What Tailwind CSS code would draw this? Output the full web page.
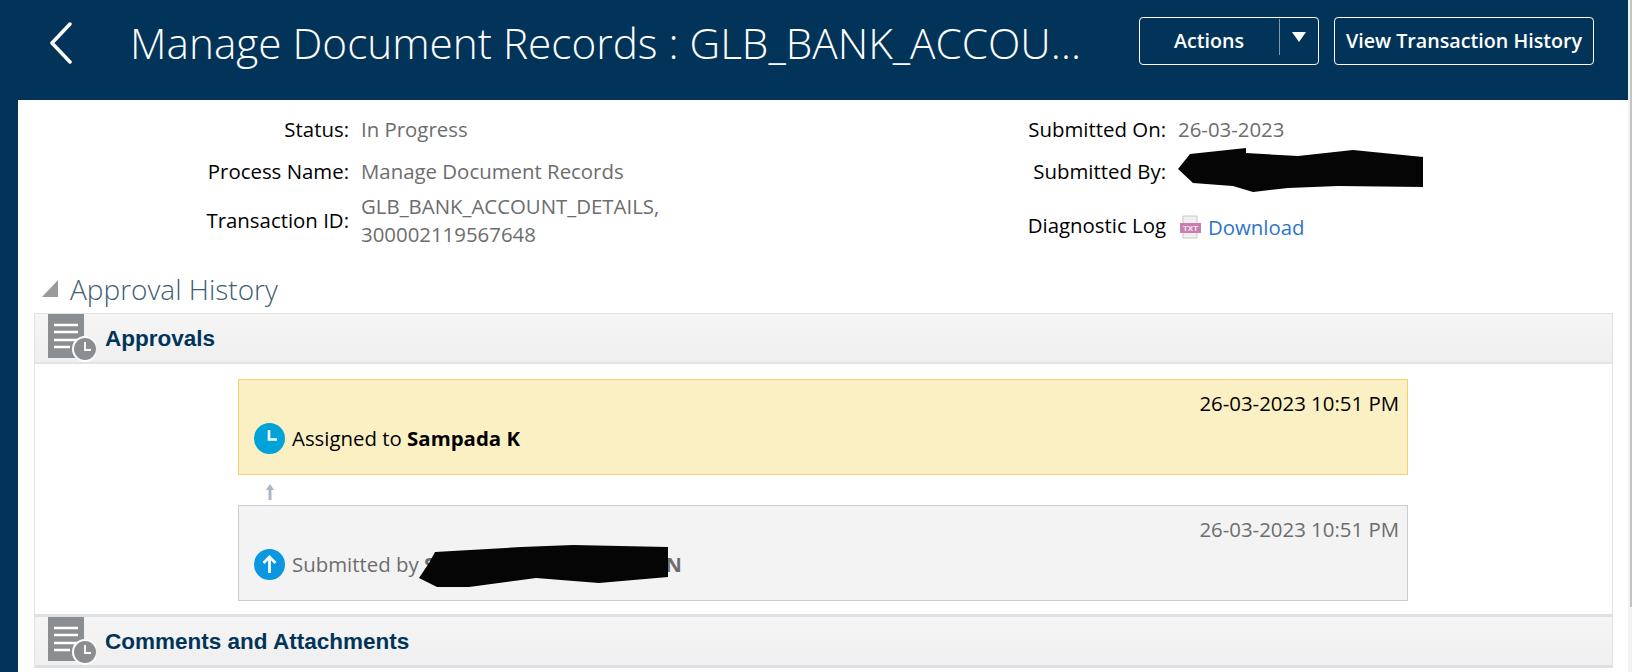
<!DOCTYPE html>
<html lang="en">
<head>
    <meta charset="UTF-8">
    <meta name="viewport" content="width=device-width, initial-scale=1.0">
    <title>Manage Document Records</title>
    <script src="https://cdn.jsdelivr.net/npm/@tailwindcss/browser@4"></script>
</head>
<body class="h-[672px] overflow-hidden flex bg-white font-['Open_Sans',sans-serif]">

  <div class="w-[1628px] h-[672px] shrink-0 bg-[#023459]">
    <!-- page header -->
    <header class="h-[100px] flex items-start text-white">
        <a href="#" class="ml-[48px] mt-[22px] w-[26px] shrink-0">
            <svg class="w-[26px] h-[42px]" viewBox="0 0 26 42" fill="none" stroke="white" stroke-width="3.5" stroke-linecap="round" stroke-linejoin="round">
                <path d="M22 2 L4 21 L22 40"></path>
            </svg>
        </a>
        <h1 class="ml-[56px] mt-[16px] w-[956px] truncate text-[42.3px] leading-[54px] font-light">Manage Document Records : GLB_BANK_ACCOUNT_DETAILS</h1>
        <div class="ml-[53px] mt-[17px] flex gap-[15px]">
            <div class="w-[180px] h-[48px] flex border border-white rounded-[4px] text-[19.7px] font-semibold">
                <button class="w-[139px] h-full text-left pl-[34px]">Actions</button>
                <span class="mt-[1px] h-[36px] border-l border-[#7f99ac]"></span>
                <button class="flex-1 h-full flex justify-center pt-[14px] pr-[1px]">
                    <svg class="w-[14px] h-[10px]" viewBox="0 0 14 10" fill="white"><path d="M0 0 H14 L7 10 Z"></path></svg>
                </button>
            </div>
            <button class="w-[260px] h-[48px] border border-white rounded-[4px] text-[19.7px] font-semibold">View Transaction History</button>
        </div>
    </header>

    <main class="ml-[18px] h-[572px] bg-white overflow-hidden text-[20.4px]">
        <!-- transaction summary -->
        <section class="h-[170px] grid grid-cols-[816px_1fr] pt-[14px]">
            <div class="grid grid-cols-[331px_1fr] gap-x-[12px] auto-rows-min items-center">
                <span class="h-[30px] leading-[30px] text-right text-black">Status:</span>
                <span class="h-[30px] leading-[30px] text-[#6d6d6d]">In Progress</span>
                <span class="mt-[12px] h-[30px] leading-[30px] text-right text-black">Process Name:</span>
                <span class="mt-[12px] h-[30px] leading-[30px] text-[#6d6d6d]">Manage Document Records</span>
                <span class="mt-[6px] text-right text-black">Transaction ID:</span>
                <span class="mt-[6px] leading-[28px] text-[#6d6d6d]">GLB_BANK_ACCOUNT_DETAILS,<br>300002119567648</span>
            </div>
            <div class="grid grid-cols-[332px_1fr] gap-x-[12px] auto-rows-min items-center">
                <span class="h-[30px] leading-[30px] text-right text-black">Submitted On:</span>
                <span class="h-[30px] leading-[30px] text-[#6d6d6d]">26-03-2023</span>
                <span class="mt-[12px] h-[30px] leading-[30px] text-right text-black">Submitted By:</span>
                <span class="relative mt-[12px] h-[30px]">
                    <svg class="absolute left-0 top-[-8px] w-[246px] h-[45px]" viewBox="0 0 246 45" fill="#050505"><path d="M0 21 L12 6 L68 0 L68 5 L120 8 L175 2 L245 9 L245 39 L160 38 L110 40 L75 44 L55 38 L15 35 Z"></path></svg>
                </span>
                <span class="mt-[21px] h-[30px] leading-[30px] text-right text-black">Diagnostic Log</span>
                <a href="#" class="mt-[26px] h-[30px] flex items-center gap-[7px] leading-[30px] text-[#2f74c9]">
                    <svg class="ml-[2px] w-[21px] h-[24px]" viewBox="0 0 21 24">
                        <path d="M3 1 H17 V23 H3 Z" fill="#f0f0f0" stroke="#c8c8c8"></path>
                        <rect x="0" y="8" width="21" height="10" fill="#c87fb0"></rect>
                        <text x="10.5" y="16" text-anchor="middle" font-size="8" font-weight="700" fill="#f8e8f3" font-family="Liberation Sans, sans-serif">TXT</text>
                    </svg>
                    Download
                </a>
            </div>
        </section>

        <!-- approval history heading -->
        <div class="h-[43px] pb-[6px] flex items-center">
            <svg class="ml-[24px] w-[16px] h-[17px]" viewBox="0 0 16 17" fill="#9a9a9a"><path d="M16 0 V17 H0 Z"></path></svg>
            <h2 class="ml-[12px] text-[28px] leading-[36px] font-light text-[#3f5d74]">Approval History</h2>
        </div>

        <!-- approvals panel -->
        <section class="ml-[16px] mr-[15px] border border-[#e2e2e2] border-b-0">
            <div class="h-[50px] flex items-center border-b-2 border-[#e2e4e6] bg-linear-to-b from-[#f5f5f5] to-[#efefef]">
                <svg class="ml-[13px] w-[48px] h-[48px]" viewBox="0 0 48 48">
                    <path d="M0 0 H36 V44 H0 Z" fill="#8b8e91"></path>
                    <path d="M6 11 H30 M6 18 H30 M6 26 H30 M6 33 H22" stroke="white" stroke-width="2.6"></path>
                    <circle cx="37" cy="35" r="12" fill="#8b8e91" stroke="white" stroke-width="2"></circle>
                    <path d="M37 28 V36 H43" fill="none" stroke="white" stroke-width="1.8"></path>
                </svg>
                <h3 class="ml-[9px] mt-[2px] font-['Liberation_Sans',sans-serif] font-bold text-[22.5px] text-[#023459]">Approvals</h3>
            </div>
            <div class="h-[250px] pl-[203px] pr-[204px] pt-[15px]">
                <div class="h-[96px] border border-[#f8cf70] bg-[#fbf0c4] pl-[15px] pr-[14px] pt-[8px] text-black">
                    <div class="text-right leading-[30px] mr-[-6px]">26-03-2023 10:51 PM</div>
                    <div class="mt-[4px] flex items-center h-[32px]">
                        <svg class="w-[31px] h-[31px]" viewBox="0 0 31 31">
                            <circle cx="15.5" cy="15.5" r="15.5" fill="#00a3d8"></circle>
                            <path d="M15 7 V16.5 H23" fill="none" stroke="white" stroke-width="2.6"></path>
                        </svg>
                        <span class="ml-[7px]">Assigned to <b>Sampada K</b></span>
                    </div>
                </div>
                <div class="h-[30px] pl-[27px] pt-[3px] flex items-center">
                    <svg class="w-[10px] h-[16px]" viewBox="0 0 10 16" fill="#a9b5c3"><path d="M5 0 L9 6 H6.5 V16 H3.5 V6 H1 Z"></path></svg>
                </div>
                <div class="h-[96px] border border-[#cbced1] bg-[#f3f3f4] pl-[15px] pr-[14px] pt-[8px] text-[#6d6d6d]">
                    <div class="text-right leading-[30px] mr-[-6px]">26-03-2023 10:51 PM</div>
                    <div class="mt-[4px] flex items-center h-[32px]">
                        <svg class="w-[31px] h-[31px]" viewBox="0 0 31 31">
                            <circle cx="15.5" cy="15.5" r="15.5" fill="#0a97e0"></circle>
                            <path d="M15.5 24 V8 M9.5 14 L15.5 8 L21.5 14" fill="none" stroke="white" stroke-width="2.8"></path>
                        </svg>
                        <span class="relative ml-[7px] whitespace-nowrap">Submitted by <b class="inline-flex justify-between w-[258px]"><span>S</span><span>N</span></b>
                            <svg class="absolute left-[127px] top-[-4px] w-[249px] h-[44px]" viewBox="0 0 249 44" fill="#050505"><path d="M16 7 L102 2 L154 0 L249 2 L249 32 L180 38 L117 33 L50 42 L18 42 L0 33 L10 18 Z"></path></svg>
                        </span>
                    </div>
                </div>
            </div>
            <div class="h-[54px] flex items-center border-t-[3px] border-b-[3px] border-[#dde1e5] bg-linear-to-b from-[#f5f5f5] to-[#efefef]">
                <svg class="ml-[13px] w-[48px] h-[48px]" viewBox="0 0 48 48">
                    <path d="M0 0 H36 V44 H0 Z" fill="#8b8e91"></path>
                    <path d="M6 11 H30 M6 18 H30 M6 26 H30 M6 33 H22" stroke="white" stroke-width="2.6"></path>
                    <circle cx="37" cy="35" r="12" fill="#8b8e91" stroke="white" stroke-width="2"></circle>
                    <path d="M37 28 V36 H43" fill="none" stroke="white" stroke-width="1.8"></path>
                </svg>
                <h3 class="ml-[9px] mt-[2px] font-['Liberation_Sans',sans-serif] font-bold text-[22.5px] text-[#023459]">Comments and Attachments</h3>
            </div>
        </section>
    </main>
  </div>

  <!-- scrollbar -->
  <div class="w-[4px] h-[672px] bg-[#f1f1f1] flex justify-end">
      <div class="w-[2px] h-[607px] bg-[#c4c4c4]"></div>
  </div>

</body>
</html>
